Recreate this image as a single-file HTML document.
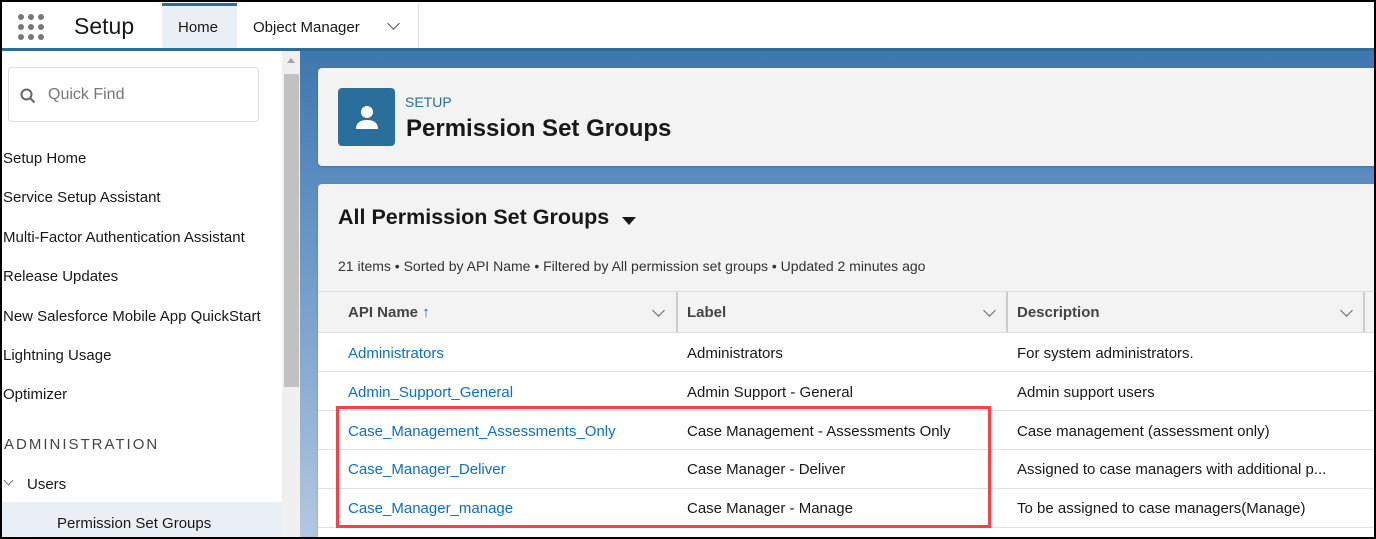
<!DOCTYPE html>
<html><head><meta charset="utf-8"><style>
*{box-sizing:border-box;margin:0;padding:0}
body{width:1376px;height:539px;overflow:hidden;font-family:"Segoe UI","Liberation Sans",sans-serif;background:#000;position:relative;color:#181818}
.frame{position:absolute;left:2px;top:2px;width:1372px;height:535px;background:#fff;overflow:hidden}
.abs{position:absolute}
.hdr{left:0;top:0;width:1372px;height:46px;background:#fff}
.bl{left:0;top:46px;width:1372px;height:3px;background:#2b6d98}
.dot{position:absolute;width:6px;height:6px;border-radius:50%;background:#777}
.main{left:298px;top:49px;width:1080px;height:490px;background:linear-gradient(180deg,#3e77ae 0%,#6a97c7 40%,#b4c8e0 100%)}
.card{background:#f3f3f3;border-radius:4px;box-shadow:0 1px 2px rgba(0,0,0,.2)}
.nav{font-size:15px;color:#181818;left:1px}
.td{position:absolute;font-size:15px}
.lnk{color:#0b6fc7}
.row{position:absolute;left:0;width:1060px;height:1px;background:#e0e0e0}
.chev{position:absolute;width:9px;height:9px;border-right:1.5px solid #666;border-bottom:1.5px solid #666;transform:rotate(45deg)}
</style></head><body><div class="frame">
<div class="abs hdr"></div>
<div class="abs" style="left:16px;top:12px;width:30px;height:30px">
<div class="dot" style="left:0;top:0"></div><div class="dot" style="left:10px;top:0"></div><div class="dot" style="left:20px;top:0"></div>
<div class="dot" style="left:0;top:10px"></div><div class="dot" style="left:10px;top:10px"></div><div class="dot" style="left:20px;top:10px"></div>
<div class="dot" style="left:0;top:20px"></div><div class="dot" style="left:10px;top:20px"></div><div class="dot" style="left:20px;top:20px"></div></div>
<div class="abs" style="left:72px;top:11px;font-size:23px">Setup</div>
<div class="abs" style="left:160px;top:1px;width:75px;height:45px;background:#e9eff4;border-top:3px solid #2b6d98"></div>
<div class="abs" style="left:176px;top:17px;font-size:15px">Home</div>
<div class="abs" style="left:251px;top:17px;font-size:15px">Object Manager</div>
<div class="chev" style="left:387px;top:17px;border-color:#555"></div>
<div class="abs" style="left:416px;top:1px;width:1px;height:45px;background:#ddd"></div>
<div class="abs bl"></div>
<div class="abs" style="left:0;top:49px;width:280px;height:490px;background:#fff"></div>
<div class="abs" style="left:280px;top:49px;width:18px;height:490px;background:#f0f0f0"></div>
<div class="abs" style="left:285px;top:56px;width:0;height:0;border-left:4px solid transparent;border-right:4px solid transparent;border-bottom:5px solid #a3a3a3"></div>
<div class="abs" style="left:282px;top:72px;width:15px;height:313px;background:#c1c1c1"></div>
<div class="abs" style="left:6px;top:65px;width:251px;height:55px;border:1px solid #ddd;border-radius:4px"></div>
<svg class="abs" style="left:18px;top:86px" width="16" height="16" viewBox="0 0 16 16"><circle cx="6.5" cy="6.5" r="5" fill="none" stroke="#666" stroke-width="2"/><path d="M10 10l4.5 4.5" stroke="#666" stroke-width="2"/></svg>
<div class="abs" style="left:46px;top:84px;font-size:16px;color:#777">Quick Find</div>
<div class="abs nav" style="top:148px">Setup Home</div>
<div class="abs nav" style="top:187px">Service Setup Assistant</div>
<div class="abs nav" style="top:227px">Multi-Factor Authentication Assistant</div>
<div class="abs nav" style="top:266px">Release Updates</div>
<div class="abs nav" style="top:306px">New Salesforce Mobile App QuickStart</div>
<div class="abs nav" style="top:345px">Lightning Usage</div>
<div class="abs nav" style="top:384px">Optimizer</div>
<div class="abs" style="left:2px;top:434px;font-size:15px;letter-spacing:2px;color:#444">ADMINISTRATION</div>
<div class="chev" style="left:3px;top:475px;width:7px;height:7px;border-color:#777;border-width:1px"></div>
<div class="abs nav" style="left:25px;top:474px">Users</div>
<div class="abs" style="left:0;top:500px;width:280px;height:40px;background:#e9eff4"></div>
<div class="abs nav" style="left:55px;top:513px">Permission Set Groups</div>
<div class="abs main"></div>
<div class="abs card" style="left:316px;top:66px;width:1070px;height:98px"></div>
<div class="abs" style="left:336px;top:86px;width:57px;height:58px;background:#2a6f9b;border-radius:4px"></div>
<svg class="abs" style="left:352px;top:102px" width="26" height="26" viewBox="0 0 26 26"><circle cx="13" cy="8" r="6" fill="#fff"/><path d="M2 25c0-6 4-9 11-9s11 3 11 9z" fill="#fff"/></svg>
<div class="abs" style="left:403px;top:92px;font-size:14px;color:#2a6f9b">SETUP</div>
<div class="abs" style="left:404px;top:113px;font-size:24px;font-weight:bold">Permission Set Groups</div>
<div class="abs card" style="left:316px;top:182px;width:1070px;height:360px"></div>
<div class="abs" style="left:336px;top:203px;font-size:21.5px;font-weight:bold">All Permission Set Groups</div>
<div class="abs" style="left:620px;top:215px;width:0;height:0;border-left:7px solid transparent;border-right:7px solid transparent;border-top:8px solid #181818"></div>
<div class="abs" style="left:336px;top:256px;font-size:14px;color:#333">21 items • Sorted by API Name • Filtered by All permission set groups • Updated 2 minutes ago</div>
<div class="abs" style="left:316px;top:289px;width:1060px;height:250px;background:#fff">
 <div class="abs" style="left:0;top:0;width:1060px;height:42px;background:#f3f3f3;border-top:1px solid #ddd;border-bottom:1px solid #ddd"></div>
 <div class="td" style="left:30px;top:13px;font-weight:bold;color:#444">API Name <span style="color:#2a5a8a">↑</span></div>
 <div class="chev" style="left:336px;top:15px"></div>
 <div class="abs" style="left:358px;top:1px;width:2px;height:40px;background:#ccc"></div>
 <div class="td" style="left:369px;top:13px;font-weight:bold;color:#444">Label</div>
 <div class="chev" style="left:667px;top:15px"></div>
 <div class="abs" style="left:688px;top:1px;width:2px;height:40px;background:#ccc"></div>
 <div class="td" style="left:699px;top:13px;font-weight:bold;color:#444">Description</div>
 <div class="chev" style="left:1024px;top:15px"></div>
 <div class="abs" style="left:1045px;top:1px;width:2px;height:40px;background:#ccc"></div>
 <div class="row" style="top:80px"></div><div class="row" style="top:119px"></div><div class="row" style="top:158px"></div><div class="row" style="top:197px"></div><div class="row" style="top:236px"></div>
 <div class="td lnk" style="left:30px;top:54px">Administrators</div><div class="td" style="left:369px;top:54px">Administrators</div><div class="td" style="left:699px;top:54px">For system administrators.</div>
 <div class="td lnk" style="left:30px;top:93px">Admin_Support_General</div><div class="td" style="left:369px;top:93px">Admin Support - General</div><div class="td" style="left:699px;top:93px">Admin support users</div>
 <div class="td lnk" style="left:30px;top:132px">Case_Management_Assessments_Only</div><div class="td" style="left:369px;top:132px">Case Management - Assessments Only</div><div class="td" style="left:699px;top:132px">Case management (assessment only)</div>
 <div class="td lnk" style="left:30px;top:170px">Case_Manager_Deliver</div><div class="td" style="left:369px;top:170px">Case Manager - Deliver</div><div class="td" style="left:699px;top:170px">Assigned to case managers with additional p...</div>
 <div class="td lnk" style="left:30px;top:209px">Case_Manager_manage</div><div class="td" style="left:369px;top:209px">Case Manager - Manage</div><div class="td" style="left:699px;top:209px">To be assigned to case managers(Manage)</div>
</div>
<div class="abs" style="left:334px;top:404px;width:655px;height:122px;border:3px solid #f0444a"></div>
</div></body></html>
